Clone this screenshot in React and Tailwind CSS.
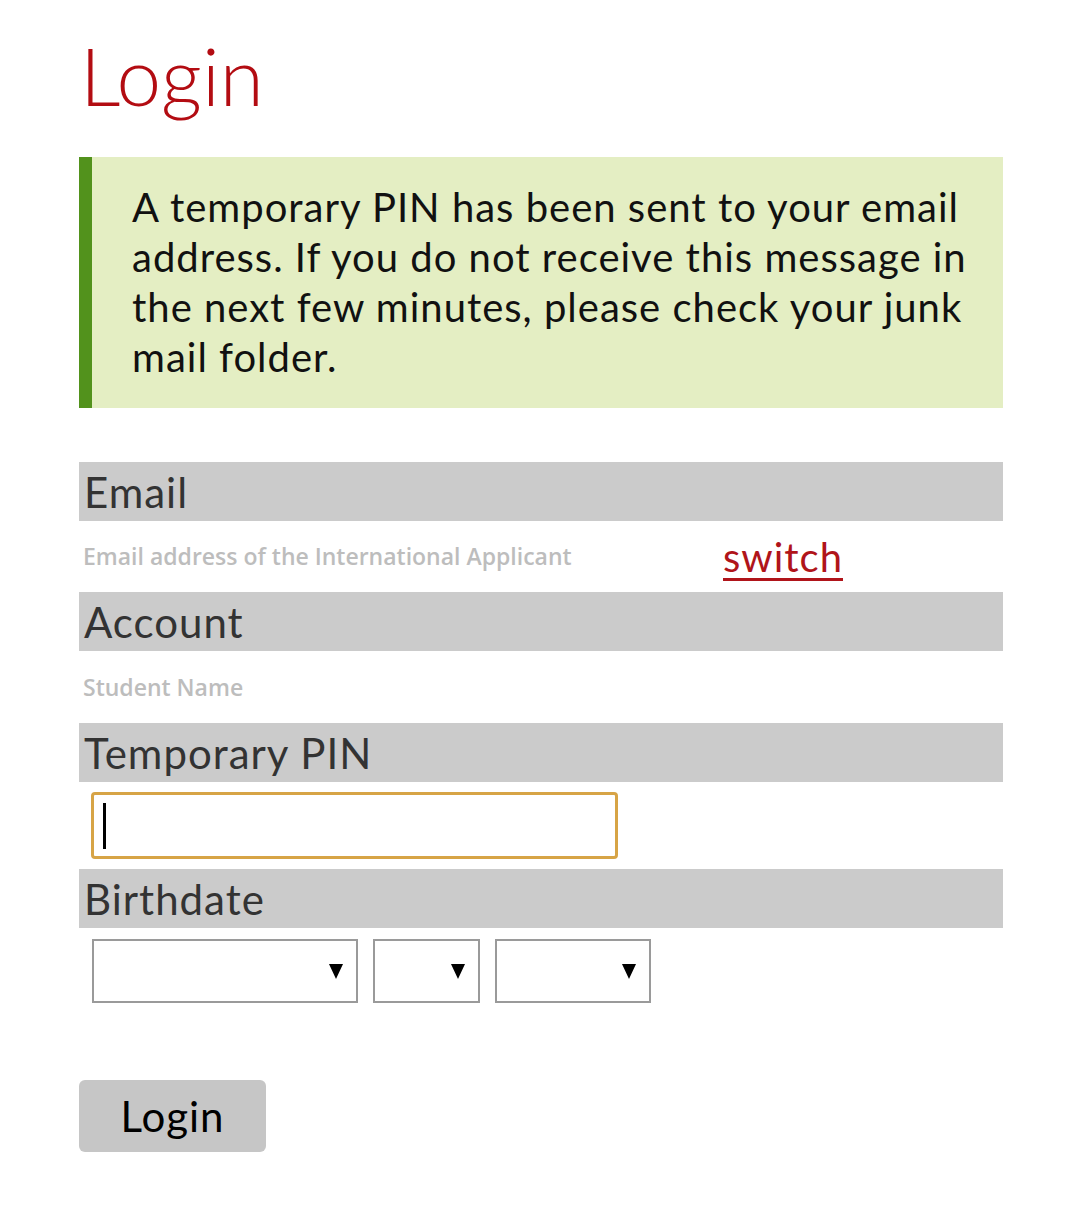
import React from "react";

const Header = ({ children }) => (
  <div className="bg-[#cbcbcb] h-[59px] flex items-center pl-[5px] text-[42px] tracking-[1px] text-[#333333] leading-none">
    {children}
  </div>
);

const SelectBox = ({ width }) => (
  <div
    className={`${width} h-[64px] border-2 border-[#9a9a9a] bg-white flex items-center justify-end pr-[13px]`}
  >
    <svg width="14" height="16" viewBox="0 0 14 16">
      <path d="M0 1 H14 L7 16 Z" fill="#000" />
    </svg>
  </div>
);

const App = () => {
  const lines = [
    "A temporary PIN has been sent to your email",
    "address. If you do not receive this message in",
    "the next few minutes, please check your junk",
    "mail folder.",
  ];

  return (
    <div
      className="bg-white min-h-[1210px] w-[1080px] pl-[79px] pr-[77px] pt-[21px]"
      style={{ fontFamily: "Lato, 'Open Sans', sans-serif" }}
    >
      {/* Title */}
      <h1 className="text-[80px] leading-[108px] font-light text-[#b30c12] pl-[1px]">Login</h1>

      {/* Notice */}
      <div className="mt-[28px] flex bg-[#e4eec3] h-[251px]">
        <div className="w-[13px] bg-[#52921c]" />
        <div className="pl-[40px] pt-[25px] text-[40px] leading-[50px] tracking-[1px] text-[#111111]">
          {lines.map((l) => (
            <div key={l} className="whitespace-nowrap">
              {l}
            </div>
          ))}
        </div>
      </div>

      {/* Form */}
      <div className="mt-[54px]">
        <Header>Email</Header>
        <div className="h-[71px] flex items-center pl-[4px]">
          <span
            className="w-[640px] text-[23px] font-semibold text-[#bdbdbd]"
            style={{ fontFamily: "'Open Sans', sans-serif" }}
          >
            Email address of the International Applicant
          </span>
          <a
            href="#"
            className="text-[40px] tracking-[1px] text-[#b0141a] underline decoration-[3px] underline-offset-[6px]"
          >
            switch
          </a>
        </div>

        <Header>Account</Header>
        <div className="h-[72px] flex items-center pl-[4px]">
          <span
            className="text-[23px] font-semibold text-[#bdbdbd]"
            style={{ fontFamily: "'Open Sans', sans-serif" }}
          >
            Student Name
          </span>
        </div>

        <Header>Temporary PIN</Header>
        <div className="pt-[10px] pb-[10px] pl-[12px]">
          <div className="w-[527px] h-[67px] border-[3px] border-[#d7a446] rounded-[4px] bg-white flex items-center pl-[9px]">
            <span className="w-[3px] h-[46px] bg-black" />
          </div>
        </div>

        <Header>Birthdate</Header>
        <div className="pt-[11px] pl-[13px] flex gap-[15px]">
          <SelectBox width="w-[266px]" />
          <SelectBox width="w-[107px]" />
          <SelectBox width="w-[156px]" />
        </div>

        <button className="mt-[77px] w-[187px] h-[72px] bg-[#c6c6c6] rounded-[6px] text-[42px] tracking-[1px] text-black">
          Login
        </button>
      </div>
    </div>
  );
};

export default App;
